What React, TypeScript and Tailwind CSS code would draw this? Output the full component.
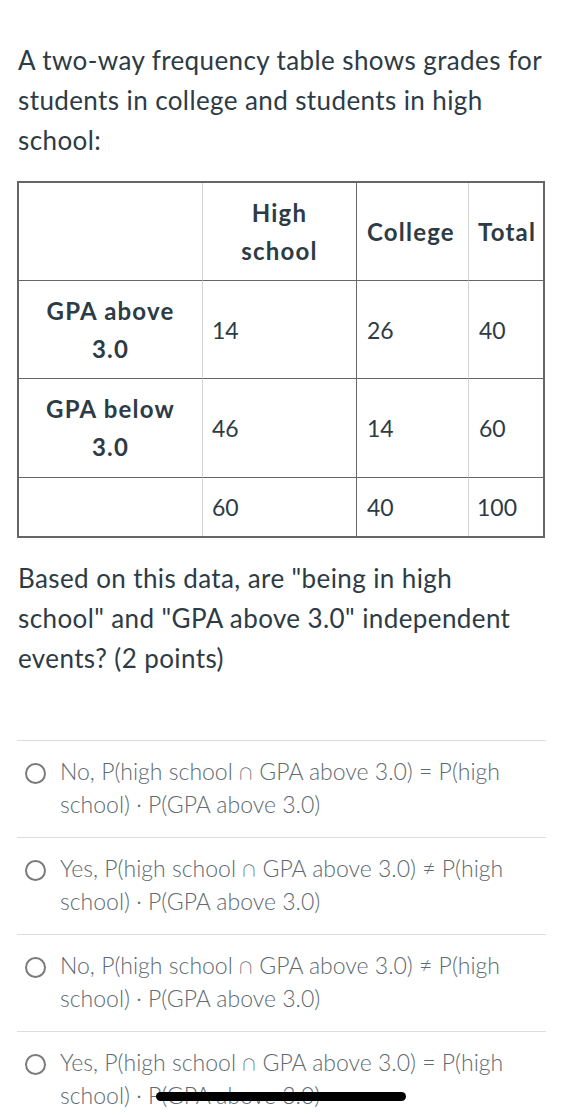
import React from "react";

const options = [
   { lead: "No", op: "=" },
   { lead: "Yes", op: "≠" },
   { lead: "No", op: "≠" },
   { lead: "Yes", op: "=" },
];

export default function App() {
   return (
      <div className="relative h-[1115px] w-[564px] overflow-hidden bg-white">
         {/* Question */}
         <div className="px-[18px] pt-[40px] text-[26px] leading-[40px] tracking-[0.4px] text-[#2d3b45] font-['Lato',sans-serif]">
            <p>A two-way frequency table shows grades for students in college and students in high school:</p>
         </div>

         {/* Frequency table */}
         <div className="ml-[17px] mt-[21px] w-[528px] border-2 border-[#666] text-[23px] leading-[38px] text-[#2d3b45] font-['Lato',sans-serif]">
            <div className="grid grid-cols-[184px_154px_112px_74px]">
               {/* header */}
               <div className="h-[98px] border-r border-b border-r-[#d4d4d4] border-b-[#666]" />
               <div className="h-[98px] flex items-center justify-center text-center text-[24px] tracking-[1.2px] font-bold border-r border-b border-r-[#666] border-b-[#666]">
                  High<br />school
               </div>
               <div className="h-[98px] flex items-center px-[10px] text-[24px] tracking-[1.2px] font-bold border-r border-b border-r-[#d4d4d4] border-b-[#666]">
                  College
               </div>
               <div className="h-[98px] flex items-center px-[9px] text-[24px] tracking-[1.2px] font-bold border-b border-b-[#666]">
                  Total
               </div>

               {/* GPA above */}
               <div className="h-[98px] flex items-center justify-center text-center text-[24px] tracking-[1.2px] font-bold border-r border-b border-r-[#d4d4d4] border-b-[#666]">
                  GPA above<br />3.0
               </div>
               <div className="h-[98px] flex items-center px-[9px] border-r border-b border-r-[#666] border-b-[#666]">14</div>
               <div className="h-[98px] flex items-center px-[10px] border-r border-b border-r-[#d4d4d4] border-b-[#666]">26</div>
               <div className="h-[98px] flex items-center px-[10px] border-b border-b-[#666]">40</div>

               {/* GPA below */}
               <div className="h-[99px] flex items-center justify-center text-center text-[24px] tracking-[1.2px] font-bold border-r border-b border-r-[#d4d4d4] border-b-[#666]">
                  GPA below<br />3.0
               </div>
               <div className="h-[99px] flex items-center px-[9px] border-r border-b border-r-[#666] border-b-[#666]">46</div>
               <div className="h-[99px] flex items-center px-[10px] border-r border-b border-r-[#d4d4d4] border-b-[#666]">14</div>
               <div className="h-[99px] flex items-center px-[10px] border-b border-b-[#666]">60</div>

               {/* totals */}
               <div className="h-[58px] border-r border-r-[#d4d4d4]" />
               <div className="h-[58px] flex items-center px-[9px] border-r border-r-[#666]">60</div>
               <div className="h-[58px] flex items-center px-[10px] border-r border-r-[#d4d4d4]">40</div>
               <div className="h-[58px] flex items-center px-[8px]">100</div>
            </div>
         </div>

         {/* Prompt */}
         <div className="pl-[18px] pr-[24px] pt-[20px] text-[26px] leading-[40px] tracking-[0.4px] text-[#2d3b45] font-['Lato',sans-serif]">
            <p>Based on this data, are "being in high school" and "GPA above 3.0" independent events? (2 points)</p>
         </div>

         {/* Answer choices */}
         <div className="ml-[17px] mt-[62px] w-[529px] font-['Lato',sans-serif]">
            {options.map((o, i) => (
               <div key={i} className="flex items-start gap-[14px] border-t border-[#dedede] pl-[8px] pt-[14px] pb-[16px]">
                  <span className="mt-[8px] h-[21px] w-[21px] shrink-0 rounded-full border-2 border-[#7a7a7a]" />
                  <p className="text-[23px] leading-[33px] font-light text-[#606a72]">
                     {o.lead}, P(high school ∩ GPA above 3.0) {o.op} P(high school) · P(GPA above 3.0)
                  </p>
               </div>
            ))}
         </div>

         {/* home indicator */}
         <div className="absolute left-[156px] top-[1092px] h-[9px] w-[250px] rounded-full bg-black" />
      </div>
   );
}
